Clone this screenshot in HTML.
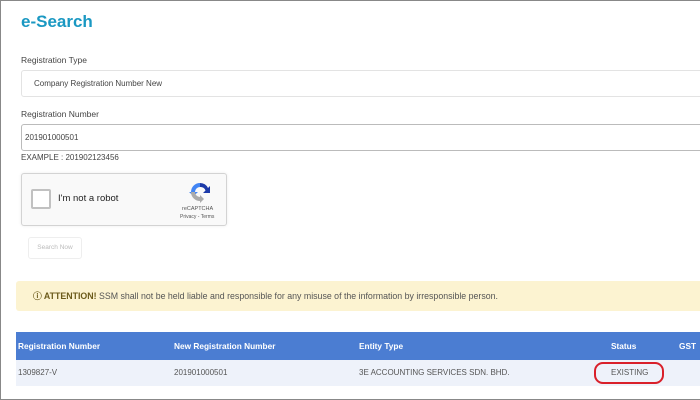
<!DOCTYPE html>
<html><head><meta charset="utf-8"><style>
*{margin:0;padding:0;box-sizing:border-box}
body{width:700px;height:400px;overflow:hidden;background:#fff;font-family:"Liberation Sans",sans-serif;color:#444;position:relative}
.frame{position:absolute;left:0;top:0;width:700px;height:400px;border:1px solid #888;border-right:none}
.a{position:absolute}
.t{left:21px;top:12px;font-size:17px;font-weight:bold;color:#1a98c2}
.lbl{font-size:8.5px;color:#444}
.inp{left:21px;width:690px;height:27px;border:1px solid #ddd;border-radius:3px;font-size:8px;color:#444;padding-left:12px;line-height:25px}
.cap{left:21px;top:173px;width:206px;height:53px;background:#f9f9f9;border:1px solid #d3d3d3;border-radius:3px;box-shadow:0 0 3px rgba(0,0,0,.08)}
.cb{left:9px;top:15px;width:20px;height:20px;border:2px solid #c1c1c1;border-radius:2px;background:#fff}
.btn{left:28px;top:237px;width:54px;height:22px;border:1px solid #eee;border-radius:3px;font-size:6.5px;color:#bbb;text-align:center;line-height:20px}
.ban{left:16px;top:281px;width:690px;height:30px;background:#fcf3d1;border-radius:3px;font-size:8.8px;color:#555;line-height:30px;padding-left:17px}
.th{left:16px;top:332px;width:690px;height:28px;background:#4b7dd2;color:#fff;font-weight:bold;font-size:8.3px}
.tr{left:16px;top:360px;width:690px;height:26px;background:#eef2fa;font-size:8px;color:#555}
.th span,.tr span{position:absolute;top:0;line-height:28px}
.tr span{line-height:26px}
</style></head><body>
<div class="frame"></div>
<div class="a t">e-Search</div>
<div class="a lbl" style="left:21px;top:55px">Registration Type</div>
<div class="a inp" style="top:70px;border-color:#e3e3e3">Company Registration Number New</div>
<div class="a lbl" style="left:21px;top:109px">Registration Number</div>
<div class="a inp" style="top:124px;border-color:#bbb;padding-left:3px">201901000501</div>
<div class="a lbl" style="left:21px;top:153px;font-size:8px">EXAMPLE : 201902123456</div>
<div class="a cap">
 <div class="a cb"></div>
 <div class="a" style="left:36px;top:19px;font-size:9.5px;color:#222">I'm not a robot</div>
 <svg class="a" style="left:167px;top:7px" width="22" height="22" viewBox="0 0 22 22">
  <path d="M11 2a9 9 0 0 1 8 5l2-2v7h-7l2.5-2.5A5 5 0 0 0 11 6z" fill="#1c3aa9"/>
  <path d="M2 11a9 9 0 0 1 9-9v4a5 5 0 0 0-5 5H9L4.5 15 0 11z" fill="#4285f4"/>
  <path d="M11 20a9 9 0 0 1-9-9h4a5 5 0 0 0 5 5v-2l4 4-4 4z" fill="#ababab"/>
 </svg>
 <div class="a" style="left:160px;top:32px;font-size:5.5px;color:#555">reCAPTCHA</div>
 <div class="a" style="left:158px;top:40px;font-size:5px;color:#555">Privacy - Terms</div>
</div>
<div class="a btn">Search Now</div>
<div class="a ban"><b style="color:#6b5a1a">&#9432; ATTENTION!</b> SSM shall not be held liable and responsible for any misuse of the information by irresponsible person.</div>
<div class="a th"><span style="left:2px">Registration Number</span><span style="left:158px">New Registration Number</span><span style="left:343px">Entity Type</span><span style="left:595px">Status</span><span style="left:663px">GST</span></div>
<div class="a tr"><span style="left:2px">1309827-V</span><span style="left:158px">201901000501</span><span style="left:343px">3E ACCOUNTING SERVICES SDN. BHD.</span><span style="left:595px">EXISTING</span></div>
<div class="a" style="left:594px;top:362px;width:70px;height:22px;border:2px solid #d9202a;border-radius:9px"></div>
</body></html>
